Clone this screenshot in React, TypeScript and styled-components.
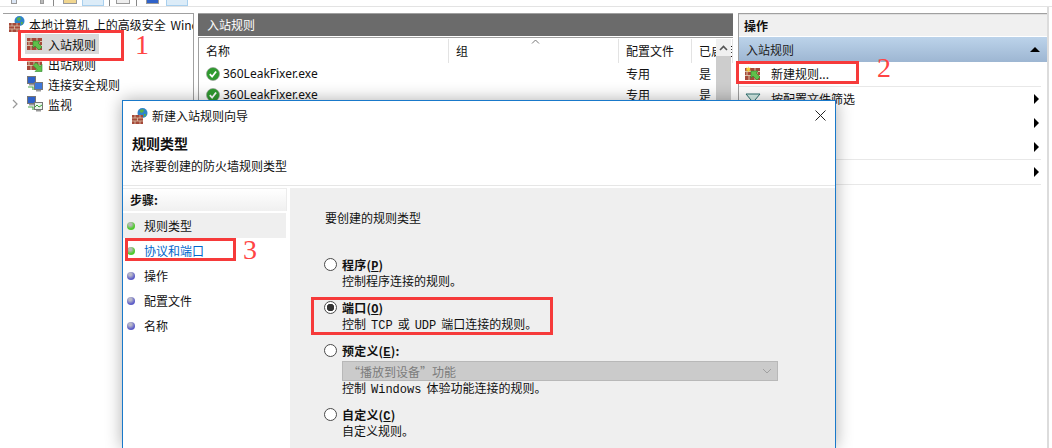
import React from 'react';
import styled, {createGlobalStyle} from 'styled-components';

const GlobalStyle = createGlobalStyle`
  html, body {
    margin: 0;
    padding: 0;
    background: #fff;
  }
  body {
    font-family: "Noto Sans CJK SC", "Liberation Sans", sans-serif;
    font-size: 12px;
    color: #111;
  }
`;

const Page = styled.div`
  position: relative;
  width: 1052px;
  height: 448px;
  overflow: hidden;
  background: #fff;
`;

const Toolbar = styled.div`
  display: flex;
  align-items: flex-end;
  height: 6px;
  overflow: hidden;
  border-bottom: 1px solid #e3e3e3;
`;

const ToolIcon = styled.div<{$bg: string; $w: number; $gap: number; $active?: boolean}>`
  width: ${(p) => p.$w}px;
  height: ${(p) => (p.$active ? 6 : 4)}px;
  margin-left: ${(p) => p.$gap}px;
  background: ${(p) => p.$bg};
  border: 1px solid ${(p) => (p.$active ? '#a9d0ee' : '#9a9a9a')};
  border-top: none;
  box-sizing: border-box;
  align-self: flex-start;
`;

const ToolSep = styled.div<{$gap: number}>`
  width: 1px;
  height: 6px;
  margin-left: ${(p) => p.$gap}px;
  background: #888;
  align-self: flex-start;
`;

const Panes = styled.div`
  display: flex;
  height: 441px;
  padding: 6px 0 0 3px;
  box-sizing: border-box;
`;

const TreePane = styled.div`
  width: 191px;
  height: 100%;
  flex: none;
  border-top: 1px solid #a0a0a0;
  border-right: 1px solid #a0a0a0;
  padding: 0 0 0 6px;
  box-sizing: border-box;
  overflow: hidden;
  white-space: nowrap;
`;

const TreeRow = styled.div<{$indent?: number}>`
  display: flex;
  align-items: center;
  height: 20px;
  padding-left: ${(p) => p.$indent ?? 0}px;
  font-size: 12px;
  word-spacing: 2px;
`;

const TreeItem = styled.div<{$selected?: boolean}>`
  display: flex;
  align-items: center;
  gap: 5px;
  height: 20px;
  padding: 0 3px 0 2px;
  background: ${(p) => (p.$selected ? '#d9d9d9' : 'transparent')};
`;

const RootItem = styled.div`
  display: flex;
  align-items: center;
  gap: 4px;
`;

const Caret = styled.span`
  width: 12px;
  margin-right: 4px;
  display: flex;
  justify-content: center;
`;

const CenterPane = styled.div`
  position: relative;
  width: 535px;
  flex: none;
  margin-left: 4px;
  height: 100%;
`;

const CenterTitle = styled.div`
  height: 22px;
  background: #6b6b6b;
  color: #fff;
  font-size: 12px;
  line-height: 22px;
  padding-left: 9px;
  border-top: 1px solid #a0a0a0;
`;

const ListBox = styled.div`
  position: relative;
  height: 100%;
  margin-top: 1px;
  border-top: 1px solid #a0a0a0;
  border-left: 1px solid #a0a0a0;
  overflow: hidden;
`;

const ListHeader = styled.div`
  display: grid;
  grid-template-columns: 250px 170px 73px 1fr;
  height: 24px;
  margin-top: 1px;
`;

const HeaderCell = styled.div`
  border-right: 1px solid #e3e3e3;
  padding-left: 7px;
  line-height: 24px;
  font-size: 12px;
  white-space: nowrap;
  overflow: hidden;
`;

const ListRow = styled.div`
  display: grid;
  grid-template-columns: 250px 170px 73px 1fr;
  height: 21px;
  line-height: 21px;
  font-size: 12px;
`;

const NameCell = styled.div`
  display: flex;
  align-items: center;
  gap: 3px;
  padding-left: 7px;
  font-family: "Noto Sans", "Noto Sans CJK SC", sans-serif;
`;

const PlainCell = styled.div`
  padding-left: 7px;
`;

const ScrollBar = styled.div`
  position: absolute;
  right: 2px;
  top: 1px;
  width: 15px;
  height: 100%;
  background: #f0f0f0;
`;

const ScrollArrow = styled.div`
  height: 17px;
  display: flex;
  align-items: center;
  justify-content: center;
`;

const ScrollThumb = styled.div`
  height: 120px;
  background: #cdcdcd;
`;

const SortMark = styled.svg`
  position: absolute;
  left: 332px;
  top: 1px;
`;

const ActionPane = styled.div`
  width: 308px;
  flex: none;
  margin-left: 5px;
  height: 100%;
  border-top: 1px solid #a0a0a0;
  border-left: 1px solid #a0a0a0;
`;

const ActionTitle = styled.div`
  height: 21px;
  line-height: 21px;
  background: #f0f0f0;
  padding-left: 5px;
  font-size: 12px;
  font-weight: 700;
  border-top: 1px solid #e0e0e0;
  border-bottom: 1px solid #fff;
`;

const ActionGroup = styled.div`
  display: flex;
  align-items: center;
  justify-content: space-between;
  height: 25px;
  padding: 0 7px 0 7px;
  background: linear-gradient(#bcd3ea, #9db6d2);
  font-size: 12px;
  color: #222;
`;

const ActionRow = styled.div<{$sep?: boolean}>`
  display: flex;
  align-items: center;
  height: ${(p) => (p.$sep ? 25 : 24)}px;
  box-sizing: border-box;
  padding-left: 6px;
  border-bottom: ${(p) => (p.$sep ? '1px solid #e8e8e8' : 'none')};
  margin-right: 6px;
  font-size: 12px;
`;

const ActionLabel = styled.span`
  margin-left: 10px;
  padding-bottom: 2px;
  flex: 1;
`;

const ActionArrow = styled.span`
  width: 0;
  height: 0;
  margin-right: 2px;
  border-left: 5px solid #000;
  border-top: 5px solid transparent;
  border-bottom: 5px solid transparent;
`;

const RightEdge = styled.div`
  width: 2px;
  flex: none;
  margin-left: 0;
  margin-top: -6px;
  background: #dcdcdc;
`;

const Dialog = styled.div`
  position: absolute;
  left: 122px;
  top: 100px;
  width: 714px;
  height: 348px;
  display: flex;
  flex-direction: column;
  background: #fff;
  border: 1px solid #1979ca;
  border-bottom: none;
  box-sizing: border-box;
  box-shadow: 0 0 16px rgba(0, 0, 0, 0.32);
`;

const DialogTitleBar = styled.div`
  display: flex;
  flex: none;
  align-items: center;
  height: 29px;
  padding-left: 9px;
  gap: 4px;
  font-size: 12px;
`;

const CloseButton = styled.svg`
  margin-left: auto;
  margin-right: 9px;
`;

const DialogHead = styled.div`
  flex: none;
  height: 56px;
  padding-left: 9px;
  border-bottom: 1px solid #e6e6e6;
  box-sizing: border-box;
`;

const HeadTitle = styled.div`
  font-size: 14px;
  font-weight: 700;
  line-height: 27px;
`;

const HeadSub = styled.div`
  font-size: 12px;
  line-height: 17px;
  margin-left: -1px;
`;

const DialogBody = styled.div`
  flex: 1;
  min-height: 0;
  display: flex;
  padding-top: 2px;
  gap: 3px;
`;

const Steps = styled.div`
  width: 164px;
  flex: none;
`;

const StepsTitle = styled.div`
  height: 22px;
  line-height: 22px;
  padding-left: 7px;
  font-size: 12px;
  font-weight: 700;
  background: linear-gradient(#fff, #f0f0f0);
  border-top: 1px solid #ececec;
  border-right: 1px solid #ececec;
`;

const StepList = styled.div`
  padding-top: 2px;
`;

const StepRow = styled.div<{$current?: boolean; $link?: boolean}>`
  display: flex;
  align-items: center;
  height: 25px;
  padding-left: 4px;
  gap: 9px;
  font-size: 12px;
  margin-right: 1px;
  background: ${(p) => (p.$current ? '#efefef' : 'transparent')};
  color: ${(p) => (p.$link ? '#0066cc' : '#111')};
`;

const StepDot = styled.span<{$done?: boolean}>`
  width: 8px;
  height: 8px;
  border-radius: 50%;
  flex: none;
  background: ${(p) =>
    p.$done
      ? 'radial-gradient(circle at 40% 30%, #b8b8b8 0 18%, #4fca2e 60%)'
      : 'radial-gradient(circle at 40% 30%, #b8b8c8 0 18%, #5c5cc8 65%)'};
`;

const Content = styled.div`
  flex: 1;
  background: #efefef;
  padding: 21px 0 0 34px;
  overflow: hidden;
`;

const Prompt = styled.div`
  font-size: 12px;
  line-height: 18px;
  margin-bottom: 30px;
  padding-left: 1px;
`;

const Option = styled.div`
  display: grid;
  grid-template-columns: 13px 1fr;
  column-gap: 5px;
  margin-bottom: 11px;
`;

const Radio = styled.span<{$checked?: boolean}>`
  width: 13px;
  height: 13px;
  margin-top: 1px;
  box-sizing: border-box;
  border: 1px solid #4a4a4a;
  border-radius: 50%;
  background: ${(p) =>
    p.$checked ? 'radial-gradient(circle, #333 0 3.5px, #fff 4px)' : '#fff'};
`;

const OptionTitle = styled.div`
  height: 16px;
  font-size: 12px;
  font-weight: 700;
  line-height: 16px;
  letter-spacing: 0.2px;
`;

const OptionText = styled.div`
  grid-column: 2;
  height: 16px;
  font-size: 12px;
  line-height: 16px;
`;

const Shortcut = styled.span`
  font-family: "Liberation Mono", monospace;
  text-decoration: underline;
`;

const Mono = styled.span`
  font-family: "Liberation Mono", monospace;
  font-size: 12px;
  margin: 0 5px;
`;

const DisabledSelect = styled.div`
  grid-column: 2;
  display: flex;
  align-items: center;
  justify-content: space-between;
  width: 436px;
  height: 20px;
  box-sizing: border-box;
  margin: 2px 0 -1px;
  padding: 0 5px;
  background: #cbcbcb;
  border: 1px solid #b8b8b8;
  color: #7c7c7c;
  font-size: 12px;
`;

const Mark = styled.div<{$l: number; $t: number; $w: number; $h: number}>`
  position: absolute;
  left: ${(p) => p.$l}px;
  top: ${(p) => p.$t}px;
  width: ${(p) => p.$w}px;
  height: ${(p) => p.$h}px;
  border: 3px solid #f63a3a;
  box-sizing: border-box;
  pointer-events: none;
`;

const Num = styled.div<{$l: number; $t: number}>`
  position: absolute;
  left: ${(p) => p.$l}px;
  top: ${(p) => p.$t}px;
  color: #f44;
  font-family: "Liberation Serif", serif;
  font-size: 28px;
  line-height: 22px;
`;

function Wall({kind = 'in', size = 16}: {kind?: 'in' | 'out' | 'new'; size?: number}) {
  return (
    <svg width={size} height={size} viewBox="0 0 16 16" style={{flex: 'none'}}>
      <rect x="0" y="2" width="15" height="12" fill="#a5493a" />
      <path d="M0 5.5h15M0 9.5h15M4 2v3.5M10 2v3.5M2 5.5v4M7 5.5v4M12 5.5v4M4 9.5V14M10 9.5V14" stroke="#d9c3a8" strokeWidth="1" fill="none" />
      {kind === 'in' || kind === 'new' ? (
        <path d="M6 5h7l-2 2 4 4-3 3-4-4-2 2z" fill="#5fc04a" stroke="#2b8a2b" strokeWidth="0.6" />
      ) : null}
      {kind === 'out' ? (
        <path d="M15 15.5H8l2-2-4-4 3-3 4 4 2-2z" fill="#5fc04a" stroke="#2b8a2b" strokeWidth="0.6" />
      ) : null}
      {kind === 'new' ? (
        <path d="M3 0l.8 2 2-.6-1 1.8 1.4 1.2-2 .2-.9 2-.9-2-2-.2L1.8 3 .8 1.4l2 .6z" fill="#f5cf3a" />
      ) : null}
    </svg>
  );
}

function GlobeWall({size = 16}: {size?: number}) {
  return (
    <svg width={size} height={size} viewBox="0 0 16 16" style={{flex: 'none'}}>
      <circle cx="10.5" cy="5" r="5" fill="#2f83c9" />
      <path d="M8 2l3-1 1 2-2 2-2-1zM12 6l2 0-1 3-1-1z" fill="#58b04a" />
      <rect x="0" y="7" width="11" height="9" fill="#a5493a" />
      <path d="M0 10h11M0 13h11M3 7v3M8 7v3M5.5 10v3M3 13v3M8 13v3" stroke="#d9c3a8" strokeWidth="0.8" fill="none" />
    </svg>
  );
}

function Computers({monitor}: {monitor?: boolean}) {
  return (
    <svg width="16" height="16" viewBox="0 0 16 16" style={{flex: 'none'}}>
      <rect x="0.5" y="0.5" width="8" height="7" fill="#2f62c9" stroke="#777" />
      <rect x="2" y="8" width="5" height="1.5" fill="#999" />
      <rect x="7.5" y="6.5" width="8" height="7" fill={monitor ? '#eaf5ea' : '#3f78d9'} stroke="#777" />
      {monitor ? <path d="M8 11l2-2 2 2 3-2" stroke="#3aa53a" fill="none" /> : null}
      <rect x="9" y="14" width="5" height="1.5" fill="#999" />
      <path d="M1 11h5v3" stroke="#4aa84a" strokeWidth="1.2" fill="none" />
    </svg>
  );
}

function Check() {
  return (
    <svg width="14" height="14" viewBox="0 0 14 14" style={{flex: 'none'}}>
      <circle cx="7" cy="7" r="6.5" fill="#2f9a2f" stroke="#999" strokeWidth="0.6" />
      <path d="M3.8 7.2l2.3 2.5 4-5.2" stroke="#fff" strokeWidth="1.8" fill="none" />
    </svg>
  );
}

const ruleRows = ['360LeakFixer.exe', '360LeakFixer.exe'];
const steps = [
  {label: '规则类型', done: true, current: true},
  {label: '协议和端口', done: true, link: true},
  {label: '操作'},
  {label: '配置文件'},
  {label: '名称'},
];

export default function App() {
  return (
    <Page>
      <GlobalStyle />
      <Toolbar>
        <ToolIcon $bg="#dbe6f5" $w={6} $gap={11} />
        <ToolIcon $bg="#bbb" $w={4} $gap={23} />
        <ToolSep $gap={9} />
        <ToolIcon $bg="#f1d68f" $w={14} $gap={9} />
        <ToolIcon $bg="#dcecf8" $w={22} $gap={5} $active />
        <ToolSep $gap={5} />
        <ToolIcon $bg="#eee" $w={14} $gap={6} />
        <ToolSep $gap={6} />
        <ToolIcon $bg="#2f62c9" $w={13} $gap={9} />
        <ToolIcon $bg="#dcecf8" $w={22} $gap={7} $active />
      </Toolbar>
      <Panes>
        <TreePane>
          <TreeRow>
            <RootItem>
              <GlobeWall />
              <span>本地计算机 上的高级安全 Windows</span>
            </RootItem>
          </TreeRow>
          <TreeRow $indent={16}>
            <TreeItem $selected>
              <Wall />
              入站规则
            </TreeItem>
          </TreeRow>
          <TreeRow $indent={16}>
            <TreeItem>
              <Wall kind="out" />
              出站规则
            </TreeItem>
          </TreeRow>
          <TreeRow $indent={16}>
            <TreeItem>
              <Computers />
              连接安全规则
            </TreeItem>
          </TreeRow>
          <TreeRow>
            <Caret>
              <svg width="6" height="10" viewBox="0 0 6 10">
                <path d="M1 1l4 4-4 4" stroke="#999" fill="none" strokeWidth="1.2" />
              </svg>
            </Caret>
            <TreeItem>
              <Computers monitor />
              监视
            </TreeItem>
          </TreeRow>
        </TreePane>
        <CenterPane>
          <CenterTitle>入站规则</CenterTitle>
          <ListBox>
            <SortMark width="9" height="5" viewBox="0 0 9 5">
              <path d="M1 4.5L4.5 1 8 4.5" stroke="#777" fill="none" />
            </SortMark>
            <ListHeader>
              <HeaderCell>名称</HeaderCell>
              <HeaderCell>组</HeaderCell>
              <HeaderCell>配置文件</HeaderCell>
              <HeaderCell>已启用</HeaderCell>
            </ListHeader>
            {ruleRows.map((name, i) => (
              <ListRow key={i}>
                <NameCell>
                  <Check />
                  {name}
                </NameCell>
                <PlainCell />
                <PlainCell>专用</PlainCell>
                <PlainCell>是</PlainCell>
              </ListRow>
            ))}
            <ScrollBar>
              <ScrollArrow>
                <svg width="9" height="6" viewBox="0 0 9 6">
                  <path d="M1 5l3.5-3.5L8 5" stroke="#555" strokeWidth="1.6" fill="none" />
                </svg>
              </ScrollArrow>
              <ScrollThumb />
            </ScrollBar>
          </ListBox>
        </CenterPane>
        <ActionPane>
          <ActionTitle>操作</ActionTitle>
          <ActionGroup>
            入站规则
            <svg width="10" height="5" viewBox="0 0 10 5">
              <path d="M5 0l5 5H0z" fill="#000" />
            </svg>
          </ActionGroup>
          <ActionRow $sep>
            <Wall kind="new" />
            <ActionLabel>新建规则...</ActionLabel>
          </ActionRow>
          <ActionRow>
            <svg width="16" height="16" viewBox="0 0 16 16" style={{flex: 'none'}}>
              <path d="M1 3h14L10 9v6l-4-2V9z" fill="#d6efe9" stroke="#2c6f6f" />
            </svg>
            <ActionLabel>按配置文件筛选</ActionLabel>
            <ActionArrow />
          </ActionRow>
          <ActionRow>
            <ActionLabel />
            <ActionArrow />
          </ActionRow>
          <ActionRow $sep>
            <ActionLabel />
            <ActionArrow />
          </ActionRow>
          <ActionRow $sep>
            <ActionLabel />
            <ActionArrow />
          </ActionRow>
        </ActionPane>
        <RightEdge />
      </Panes>

      <Dialog>
        <DialogTitleBar>
          <GlobeWall />
          <span>新建入站规则向导</span>
          <CloseButton width="11" height="11" viewBox="0 0 11 11">
            <path d="M.5.5l10 10M10.5.5l-10 10" stroke="#222" fill="none" />
          </CloseButton>
        </DialogTitleBar>
        <DialogHead>
          <HeadTitle>规则类型</HeadTitle>
          <HeadSub>选择要创建的防火墙规则类型</HeadSub>
        </DialogHead>
        <DialogBody>
          <Steps>
            <StepsTitle>步骤:</StepsTitle>
            <StepList>
              {steps.map((s) => (
                <StepRow key={s.label} $current={s.current} $link={s.link}>
                  <StepDot $done={s.done} />
                  {s.label}
                </StepRow>
              ))}
            </StepList>
          </Steps>
          <Content>
            <Prompt>要创建的规则类型</Prompt>
            <Option>
              <Radio />
              <OptionTitle>
                程序(<Shortcut>P</Shortcut>)
              </OptionTitle>
              <OptionText>控制程序连接的规则。</OptionText>
            </Option>
            <Option>
              <Radio $checked />
              <OptionTitle>
                端口(<Shortcut>O</Shortcut>)
              </OptionTitle>
              <OptionText>
                控制<Mono>TCP</Mono>或<Mono>UDP</Mono>端口连接的规则。
              </OptionText>
            </Option>
            <Option>
              <Radio />
              <OptionTitle>
                预定义(<Shortcut>E</Shortcut>):
              </OptionTitle>
              <DisabledSelect>
                <span>“播放到设备”功能</span>
                <svg width="10" height="6" viewBox="0 0 10 6">
                  <path d="M1 1l4 4 4-4" stroke="#a0a0a0" fill="none" />
                </svg>
              </DisabledSelect>
              <OptionText>
                控制<Mono>Windows</Mono>体验功能连接的规则。
              </OptionText>
            </Option>
            <Option>
              <Radio />
              <OptionTitle>
                自定义(<Shortcut>C</Shortcut>)
              </OptionTitle>
              <OptionText>自定义规则。</OptionText>
            </Option>
          </Content>
        </DialogBody>
      </Dialog>

      <Mark $l={18} $t={30} $w={106} $h={31} />
      <Num $l={135} $t={34}>1</Num>
      <Mark $l={736} $t={61} $w={123} $h={23} />
      <Num $l={877} $t={57}>2</Num>
      <Mark $l={125} $t={238} $w={111} $h={23} />
      <Num $l={243} $t={239}>3</Num>
      <Mark $l={311} $t={297} $w={242} $h={38} />
    </Page>
  );
}
